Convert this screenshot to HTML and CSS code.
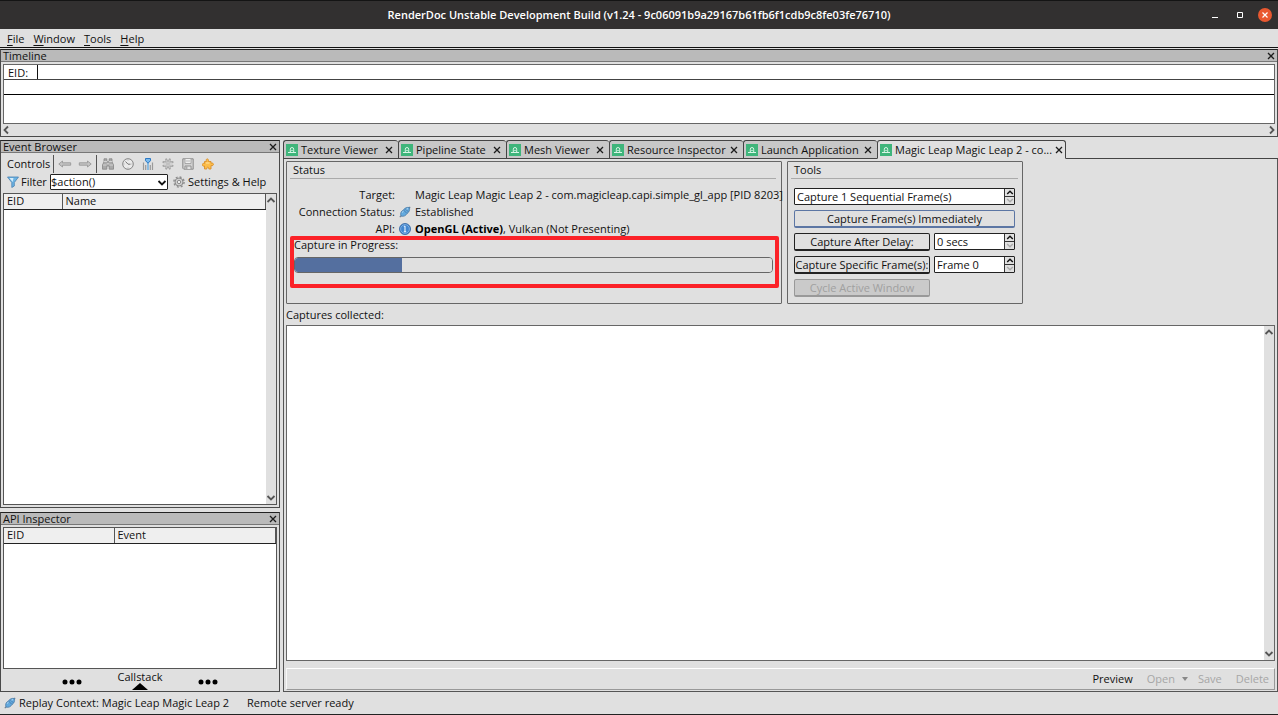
FILE: index.html
```html
<!DOCTYPE html>
<html lang="en">
<head>
<meta charset="utf-8">
<title>RenderDoc</title>
<link rel="stylesheet" href="styles.css">
</head>
<body>
<svg class="sprite" aria-hidden="true">
  <symbol id="close" viewBox="0 0 8 8"><path d="M1 1l6 6M7 1l-6 6" fill="none" stroke="#1c1c1c" stroke-width="1.300"/></symbol>
  <symbol id="up" viewBox="0 0 10 6"><path d="M1.5 5L5 1.500L8.500 5" fill="none" stroke="currentColor" stroke-width="1.800"/></symbol>
  <symbol id="down" viewBox="0 0 10 6"><path d="M1.500 1L5 4.500L8.500 1" fill="none" stroke="currentColor" stroke-width="1.800"/></symbol>
  <symbol id="left" viewBox="0 0 6 10"><path d="M5 1.500L1.500 5L5 8.500" fill="none" stroke="currentColor" stroke-width="1.800"/></symbol>
  <symbol id="right" viewBox="0 0 6 10"><path d="M1 1.500L4.500 5L1 8.500" fill="none" stroke="currentColor" stroke-width="1.800"/></symbol>
  <symbol id="logo" viewBox="0 0 12 12"><rect width="12" height="12" fill="#3fb57b"/><path d="M2 8.500h8" stroke="#d9f5e6"/><path d="M4.300 8V5.200a1.700 1.700 0 0 1 3.400 0V8" fill="none" stroke="#d9f5e6"/><path d="M4.500 6.500h3" stroke="#a5e0c3"/></symbol>
  <symbol id="plug" viewBox="0 0 12 12"><path d="M.8 11.200l3-3M9 3l2.200-2.200" stroke="#6b7f93" stroke-width="1.200"/><path d="M2 10C1 7.500 2 5 4.500 4C5.500 2 8 1 10.500 1.500C11 4 10 6.500 8 7.500C7 9.500 4.500 11 2 10z" fill="#62a9de" stroke="#4c7ba6" stroke-width=".8"/><path d="M4.500 4l3.500 3.500M6.300 2.800l3 3" stroke="#3d6f9d" stroke-width=".7"/><path d="M3 6.500L4.500 5.200M7.500 3.200l1.500-.6" stroke="#d2e9f8" stroke-width=".8"/></symbol>
  <symbol id="info" viewBox="0 0 12 12"><circle cx="6" cy="6" r="5.500" fill="#4286cf" stroke="#295d9c" stroke-width=".8"/><circle cx="6" cy="6" r="4.400" fill="none" stroke="#8fbbe8" stroke-width=".7"/><path d="M6 3v6M4.800 3.300h1.200M4.800 8.800h2.400" fill="none" stroke="#e5f2ff" stroke-width="1.100"/></symbol>
  <symbol id="funnel" viewBox="0 0 12 12"><path d="M.5 1h11L7.300 6.500v3.500L4.800 11.500v-5z" fill="#6cb4e4" stroke="#4782b3" stroke-width=".8"/><path d="M2.500 2h4L5.600 6z" fill="#d5edfb"/></symbol>
  <symbol id="prev" viewBox="0 0 14 8"><path d="M.8 4L4.500 1v1.800h8.200v2.400H4.500V7z" fill="#c4c4c4" stroke="#999" stroke-width=".9"/></symbol>
  <symbol id="next" viewBox="0 0 14 8"><path d="M13.200 4L9.500 1v1.800H1.300v2.400h8.200V7z" fill="#c4c4c4" stroke="#999" stroke-width=".9"/></symbol>
  <symbol id="binoculars" viewBox="0 0 12 12"><path d="M2 .8h2.800v3h2.400v-3H10v3l1.500 3.200v4.200H7.200V8H4.800v3.200H.5V7L2 3.800z" fill="#aaa" stroke="#858585" stroke-width=".8"/><path d="M2 3.500h3M7 3.500h3M1 7h3.500M7.500 7H11M4.800 5.800h2.400" stroke="#dedede" stroke-width=".8"/></symbol>
  <symbol id="clock" viewBox="0 0 12 12"><circle cx="6" cy="6" r="5.300" fill="#eaeaea" stroke="#858585"/><path d="M3.500 3.500L6 6.200h2.500" fill="none" stroke="#777"/><path d="M6 1.500v1M6 9.500v1M1.500 6h1M9.500 6h1" stroke="#aaa"/></symbol>
  <symbol id="bars" viewBox="0 0 12 12"><path d="M1.500 12V4.500M3.700 12V7M8.300 12V7M10.500 12V4.500" stroke="#9a9a9a" stroke-width="1.200"/><path d="M6 12V5" stroke="#69ace0" stroke-width="1.400"/><path d="M3.500.5h5v2.200L6 5.200L3.500 2.700z" fill="#79b9ec" stroke="#2b78c4"/></symbol>
  <symbol id="asterisk" viewBox="0 0 12 12"><path d="M4.200 1.500L7.800 10.500M7.800 1.500L4.200 10.500M1.500 4.200h9M1.500 7.800h9" stroke="#a8a8a8" stroke-width="2.200" stroke-linecap="round"/><path d="M4.200 2L7.800 10M7.800 2L4.200 10M2 4.300h8M2 7.700h8" stroke="#cdcdcd" stroke-width=".8"/></symbol>
  <symbol id="disk" viewBox="0 0 12 12"><path d="M.8.8h10.400v10.400H1.800l-1-1z" fill="#d2d2d2" stroke="#8b8b8b"/><path d="M3 1v4.500h6V1" fill="#eee" stroke="#999" stroke-width=".8"/><path d="M4 3h4" stroke="#aaa" stroke-width=".8"/><path d="M3 11V8h6v3M4.800 8.500V11" fill="#e2e2e2" stroke="#8b8b8b" stroke-width=".9"/></symbol>
  <symbol id="puzzle" viewBox="0 0 12 12"><path d="M2.500 3.500h2C3 0 7.500 0 6.300 3.500H9v1.700c3.300-1 3.300 3.200 0 2.400V11H6.800C7 8.500 4.800 8.500 4.800 11H2.500V8C-.5 9-.5 4.500 2.500 5.500z" fill="#fcbd4a" stroke="#d98f2b" stroke-width=".9" stroke-linejoin="round"/><path d="M4 5h3.500" stroke="#ffe3a3"/></symbol>
  <symbol id="gear" viewBox="0 0 12 12"><circle cx="6" cy="6" r="5.100" fill="none" stroke="#8c8c8c" stroke-width="1.400" stroke-dasharray="2 2.005"/><circle cx="6" cy="6" r="4" fill="#d0d0d0" stroke="#8c8c8c" stroke-width="1"/><circle cx="6" cy="6" r="1.700" fill="#ededed" stroke="#858585" stroke-width=".9"/></symbol>
</svg>

<header class="titlebar">
  <span></span>
  <h1>RenderDoc Unstable Development Build (v1.24 - 9c06091b9a29167b61fb6f1cdb9c8fe03fe76710)</h1>
  <div class="window-buttons">
    <button aria-label="Minimize"><svg viewBox="0 0 8 8" width="8" height="8"><path d="M1 6.500h6" stroke="#fff"/></svg></button>
    <button aria-label="Maximize"><svg viewBox="0 0 8 8" width="8" height="8"><path d="M1.500 1.500h5v5h-5z" fill="none" stroke="#fff"/></svg></button>
    <button class="quit" aria-label="Close"><svg viewBox="0 0 8 8" width="8" height="8"><path d="M1.500 1.500l5 5M6.500 1.500l-5 5" stroke="#fff" stroke-width="1.200"/></svg></button>
  </div>
</header>

<nav class="menubar">
  <button><u>F</u>ile</button><button><u>W</u>indow</button><button><u>T</u>ools</button><button><u>H</u>elp</button>
</nav>

<section class="dock timeline">
  <div class="dock-title"><h2>Timeline</h2><button aria-label="Close Timeline"><svg class="x"><use href="#close"/></svg></button></div>
  <div class="track">
    <div class="track-eid"><span>EID:</span></div>
    <div class="track-line"></div>
    <div class="track-body"></div>
  </div>
  <div class="hscroll"><svg><use href="#left"/></svg><svg><use href="#right"/></svg></div>
</section>

<main class="workspace">
  <div class="side">
    <section class="dock events">
      <div class="dock-title"><h2>Event Browser</h2><button aria-label="Close Event Browser"><svg class="x"><use href="#close"/></svg></button></div>
      <div class="tools-row">
        <span class="controls">Controls</span>
        <div class="arrows">
          <button aria-label="Previous"><svg class="arrow"><use href="#prev"/></svg></button>
          <button aria-label="Next"><svg class="arrow"><use href="#next"/></svg></button>
        </div>
        <div class="actions">
          <button aria-label="Find"><svg class="icon"><use href="#binoculars"/></svg></button>
          <button aria-label="Time"><svg class="icon"><use href="#clock"/></svg></button>
          <button aria-label="Columns"><svg class="icon"><use href="#bars"/></svg></button>
          <button aria-label="Bookmark"><svg class="icon"><use href="#asterisk"/></svg></button>
          <button aria-label="Export"><svg class="icon"><use href="#disk"/></svg></button>
          <button aria-label="Extensions"><svg class="icon"><use href="#puzzle"/></svg></button>
        </div>
      </div>
      <div class="filter-row">
        <svg class="icon"><use href="#funnel"/></svg>
        <label for="filter">Filter</label>
        <div class="combo">
          <select id="filter"><option>$action()</option></select>
          <svg><use href="#down"/></svg>
        </div>
        <button class="settings"><svg class="icon"><use href="#gear"/></svg>Settings &amp; Help</button>
      </div>
      <div class="sheet">
        <div class="sheet-view"><table class="event-table"><thead><tr><th>EID</th><th>Name</th></tr></thead></table></div>
        <div class="vscroll"><svg><use href="#up"/></svg><svg><use href="#down"/></svg></div>
      </div>
    </section>
    <section class="dock inspector">
      <div class="dock-title"><h2>API Inspector</h2><button aria-label="Close API Inspector"><svg class="x"><use href="#close"/></svg></button></div>
      <div class="sheet">
        <div class="sheet-view"><table class="api-table"><thead><tr><th>EID</th><th>Event</th></tr></thead></table></div>
      </div>
      <button class="callstack">
        <svg class="dots" viewBox="0 0 20 6"><path d="M3 3h0M10 3h0M17 3h0" stroke="#000" stroke-width="5" stroke-linecap="round"/></svg>
        <span class="callstack-label">Callstack<svg viewBox="0 0 16 7"><path d="M8 0l8 7H0z"/></svg></span>
        <svg class="dots" viewBox="0 0 20 6"><path d="M3 3h0M10 3h0M17 3h0" stroke="#000" stroke-width="5" stroke-linecap="round"/></svg>
      </button>
    </section>
  </div>

  <div class="content">
    <div class="tabs" role="tablist">
      <div class="tab" role="tab"><svg class="icon"><use href="#logo"/></svg><span>Texture Viewer</span><button aria-label="Close tab"><svg class="x"><use href="#close"/></svg></button></div>
      <div class="tab" role="tab"><svg class="icon"><use href="#logo"/></svg><span>Pipeline State</span><button aria-label="Close tab"><svg class="x"><use href="#close"/></svg></button></div>
      <div class="tab" role="tab"><svg class="icon"><use href="#logo"/></svg><span>Mesh Viewer</span><button aria-label="Close tab"><svg class="x"><use href="#close"/></svg></button></div>
      <div class="tab" role="tab"><svg class="icon"><use href="#logo"/></svg><span>Resource Inspector</span><button aria-label="Close tab"><svg class="x"><use href="#close"/></svg></button></div>
      <div class="tab" role="tab"><svg class="icon"><use href="#logo"/></svg><span>Launch Application</span><button aria-label="Close tab"><svg class="x"><use href="#close"/></svg></button></div>
      <div class="tab active" role="tab" aria-selected="true"><svg class="icon"><use href="#logo"/></svg><span>Magic Leap Magic Leap 2 - co...</span><button aria-label="Close tab"><svg class="x"><use href="#close"/></svg></button></div>
      <div class="tab-rest"></div>
    </div>
    <div class="page">
      <div class="groups">
        <section class="group">
          <h3>Status</h3>
          <dl class="facts">
            <dt>Target:</dt><dd></dd><dd>Magic Leap Magic Leap 2 - com.magicleap.capi.simple_gl_app [PID 8203]</dd>
            <dt>Connection Status:</dt><dd><svg class="icon"><use href="#plug"/></svg></dd><dd>Established</dd>
            <dt>API:</dt><dd><svg class="icon"><use href="#info"/></svg></dd><dd><b>OpenGL (Active)</b>, Vulkan (Not Presenting)</dd>
          </dl>
          <div class="capture">
            <label for="progress">Capture in Progress:</label>
            <progress id="progress" max="478" value="107"></progress>
            <div class="highlight"></div>
          </div>
        </section>
        <section class="group tools">
          <h3>Tools</h3>
          <div class="tool-grid">
            <div class="spin wide"><input aria-label="Frame count" value="Capture 1 Sequential Frame(s)"><div class="steps"><button aria-label="Up"><svg><use href="#up"/></svg></button><button aria-label="Down" disabled><svg><use href="#down"/></svg></button></div></div>
            <button class="push focus wide">Capture Frame(s) Immediately</button>
            <button class="push">Capture After Delay:</button>
            <div class="spin"><input aria-label="Delay" value="0 secs"><div class="steps"><button aria-label="Up"><svg><use href="#up"/></svg></button><button aria-label="Down" disabled><svg><use href="#down"/></svg></button></div></div>
            <button class="push">Capture Specific Frame(s):</button>
            <div class="spin"><input aria-label="Frame" value="Frame 0"><div class="steps"><button aria-label="Up"><svg><use href="#up"/></svg></button><button aria-label="Down" disabled><svg><use href="#down"/></svg></button></div></div>
            <button class="push" disabled>Cycle Active Window</button>
          </div>
        </section>
      </div>
      <p class="collected">Captures collected:</p>
      <div class="captures">
        <div class="sheet-view"></div>
        <div class="vscroll"><svg><use href="#up"/></svg><svg><use href="#down"/></svg></div>
      </div>
      <div class="capture-bar">
        <button>Preview</button>
        <button disabled>Open<svg viewBox="0 0 6 4"><path d="M0 0h6L3 4z" fill="#888"/></svg></button>
        <button disabled>Save</button>
        <button disabled>Delete</button>
      </div>
    </div>
  </div>
</main>

<footer class="status">
  <svg class="icon"><use href="#plug"/></svg>
  <span class="context">Replay Context: Magic Leap Magic Leap 2</span>
  <span>Remote server ready</span>
</footer>
</body>
</html>
```
FILE: styles.css
```css
* { box-sizing: border-box; }
body {
  margin: 0;
  height: 100vh;
  display: flex;
  flex-direction: column;
  overflow: hidden;
  background: #e0e0e0;
  border-bottom: 1px solid #222;
  color: #111;
  font: 11px/16px "Open Sans", "Noto Sans", sans-serif;
  white-space: nowrap;
}
h1, h2, h3, p, dl, dd { margin: 0; font-size: inherit; font-weight: normal; }
button, input, select { font: inherit; color: inherit; }
button { border: 0; padding: 0; background: none; display: flex; align-items: center; justify-content: center; }
svg { display: block; flex: none; }
.sprite { display: none; }
.icon { width: 12px; height: 12px; }
.x { width: 8px; height: 8px; }

.titlebar {
  flex: none;
  height: 29px;
  display: grid;
  grid-template-columns: 1fr auto 1fr;
  align-items: center;
  padding: 0 6px;
  background: #323030;
  border-top: 1px solid #141414;
  color: #fff;
}
.titlebar h1 { font-weight: 600; }
.window-buttons { display: flex; justify-content: flex-end; gap: 11px; }
.window-buttons button { width: 14px; height: 14px; border-radius: 50%; }
.window-buttons .quit { background: #e95830; }

.menubar { flex: none; display: flex; gap: 9px; height: 19px; padding: 2px 7px 0; border-bottom: 1px solid #111; }
.menubar button { height: 16px; }
.menubar u { text-underline-offset: 2px; }

.dock { display: flex; flex-direction: column; border: 1px solid #4a4a4a; border-top-color: #222; }
.dock-title {
  flex: none;
  height: 12px;
  display: flex;
  align-items: center;
  justify-content: space-between;
  padding: 0 2px;
  background: #bababa;
  border-bottom: 1px solid #777;
}
.dock-title h2 { line-height: 12px; }

.timeline { flex: none; margin-top: 1px; }
.track { margin: 2px 2px 0; border: 1px solid #666; background: #fff; }
.track-eid { height: 15px; border-bottom: 1px solid #444; display: flex; }
.track-eid span { width: 34px; padding-left: 4px; border-right: 1px solid #111; }
.track-line { height: 15px; border-bottom: 1px solid #000; }
.track-body { height: 28px; }
.hscroll { height: 12px; padding: 0 2px; display: flex; justify-content: space-between; align-items: center; color: #555; }
.hscroll svg { width: 6px; height: 10px; }

.workspace { flex: 1; min-height: 0; display: flex; gap: 3px; margin-top: 3px; }
.side { flex: none; width: 280px; display: flex; flex-direction: column; gap: 4px; }
.events { flex: 1; min-height: 0; padding-bottom: 2px; }
.tools-row { display: flex; align-items: center; height: 19px; padding: 0 6px; margin-top: 1px; }
.controls { width: 46px; }
.arrows, .actions { display: flex; align-items: center; border-left: 1px solid #555; height: 18px; }
.arrows { padding: 0 4px 0 4px; gap: 6px; }
.actions { padding-left: 5px; gap: 8px; }
.arrow { width: 14px; height: 8px; }
.filter-row { display: flex; align-items: center; height: 17px; padding-left: 6px; }
.filter-row label { width: 31px; padding-left: 2px; }
.combo { position: relative; width: 118px; height: 16px; }
.combo select {
  display: block;
  width: 100%;
  height: 100%;
  padding: 0;
  line-height: 14px;
  appearance: none;
  background: #fff;
  border: 1px solid #222;
  border-radius: 1px;
}
.combo svg { position: absolute; right: 1px; top: 6px; width: 10px; height: 6px; pointer-events: none; }
.settings { margin-left: 5px; gap: 3px; }
.sheet { flex: 1; min-height: 0; display: flex; margin: 2px 2px 0; border: 1px solid #555; background: #fff; }
.events .sheet { margin-top: 3px; }
.sheet-view { flex: 1; background: #fff; }
.vscroll { width: 10px; background: #e0e0e0; display: flex; flex-direction: column; align-items: center; justify-content: space-between; padding: 3px 0; color: #555; }
.vscroll svg { width: 10px; height: 6px; }
table { width: 100%; border-collapse: collapse; table-layout: fixed; }
th {
  height: 15px;
  padding: 0 3px;
  line-height: 14px;
  font-weight: normal;
  text-align: left;
  background: #efefef;
  border-bottom: 1px solid #222;
  border-right: 1px solid #555;
}
.event-table th:first-child { width: 58px; }
.api-table th:first-child { width: 110px; }
.inspector { flex: none; height: 180px; }
.callstack { height: 22px; gap: 36px; }
.callstack-label { display: flex; flex-direction: column; align-items: center; line-height: 12px; }
.callstack-label svg { width: 16px; height: 7px; }
.dots { width: 20px; height: 6px; margin-top: 4px; }

.content { flex: 1; min-width: 0; display: flex; flex-direction: column; }
.tabs { flex: none; height: 19px; display: grid; grid-template-columns: 115px 108px 103px 134px 134px 189px 1fr; }
.tab {
  display: flex;
  align-items: center;
  min-width: 0;
  padding: 0 5px 0 2px;
  gap: 3px;
  background: #c8c8c8;
  border: 1px solid #444;
  border-right-width: 0;
  border-radius: 3px 3px 0 0;
}
.tab span { flex: 1; }
.tab.active { padding-right: 4px; background: #e0e0e0; border-right-width: 1px; border-bottom-color: transparent; }
.tab-rest { border-bottom: 1px solid #444; }
.page {
  flex: 1;
  min-height: 0;
  display: flex;
  flex-direction: column;
  padding: 2px 2px 1px;
  border: 1px solid #555;
  border-top: 0;
}
.groups { display: flex; gap: 5px; }
.group { width: 496px; height: 143px; padding: 0 5px 0 3px; border: 1px solid #666; border-radius: 1px; }
.group h3 { height: 17px; padding-left: 3px; border-bottom: 1px solid #aaa; }
.facts { display: grid; grid-template-columns: 105px 12px 1fr; column-gap: 4px; grid-auto-rows: 17px; align-items: center; margin-top: 7px; }
.facts dt { text-align: right; }
.facts b { color: #000; }
.capture { position: relative; padding-left: 4px; }
.capture label { display: block; height: 20px; }
progress {
  display: block;
  width: 479px;
  height: 16px;
  appearance: none;
  overflow: hidden;
  border: 1px solid #666;
  border-radius: 4px;
  background: #e0e0e0;
}
progress::-webkit-progress-bar { background: #e0e0e0; }
progress::-webkit-progress-value { background: #546f9f; }
.highlight { position: absolute; left: 0; top: -1px; width: 489px; height: 52px; border: 4px solid #fb2228; border-radius: 2px; }

.tools { width: 236px; padding-right: 4px; }
.tool-grid { display: grid; grid-template-columns: 136px 81px; column-gap: 4px; row-gap: 5px; padding: 9px 0 0 3px; }
.push { height: 18px; border: 1px solid #222; border-bottom-width: 2px; border-radius: 2px; line-height: 14px; }
.push.focus { border-color: #5c76a4; }
.push:disabled { color: #a0a0a0; background: #cacaca; border-color: #999; }
.spin { height: 17px; display: flex; border: 1px solid #222; border-radius: 1px; background: #fff; }
.wide { grid-column: span 2; }
.spin input { flex: 1; min-width: 0; border: 0; padding: 0 2px; background: none; }
.steps { width: 10px; display: flex; flex-direction: column; border-left: 1px solid #333; background: #e0e0e0; }
.steps button { flex: 1; }
.steps button + button { border-top: 1px solid #333; color: #aaa; }
.steps svg { width: 8px; height: 5px; }
.collected { height: 21px; padding-top: 3px; }
.captures { flex: 1; min-height: 0; display: flex; border: 1px solid #666; background: #fff; }
.capture-bar {
  flex: none;
  height: 22px;
  margin-top: 7px;
  display: flex;
  justify-content: flex-end;
  gap: 14px;
  padding-right: 5px;
  border: 1px solid #999;
  border-top-color: #fff;
  border-left-color: #f6f6f6;
}
.capture-bar button { gap: 7px; font-weight: 500; }
.capture-bar button:disabled { color: #a6a6a6; font-weight: 400; }
.capture-bar svg { width: 6px; height: 4px; }
.capture-bar button:has(svg) { margin-right: -4px; }

.status { flex: none; height: 22px; display: flex; align-items: center; padding: 0 4px 0; gap: 3px; }
.context { width: 225px; }
```
